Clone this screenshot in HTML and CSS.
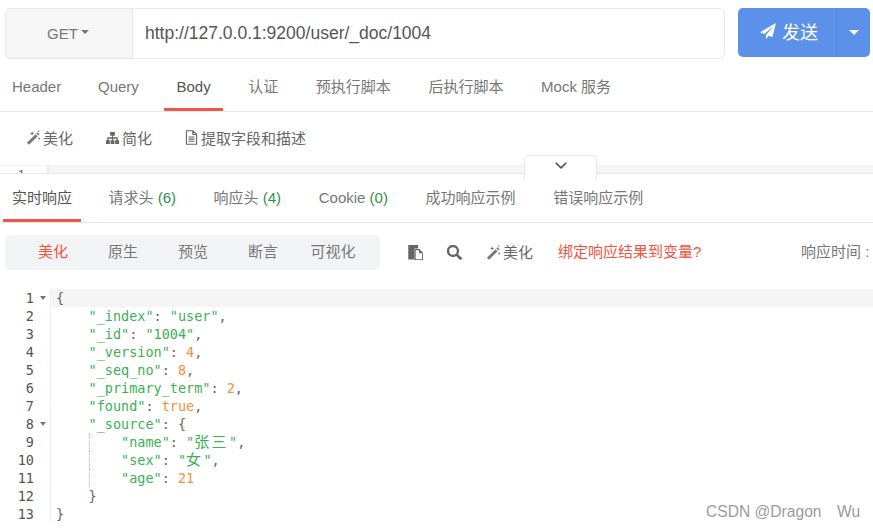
FILE: index.html
```html
<!DOCTYPE html>
<html lang="zh-CN">
<head>
<meta charset="utf-8">
<title>GET</title>
<link rel="stylesheet" href="styles.css">
</head>
<body>
<div class="page">
  <div class="url-row">
    <div class="url-box">
      <div class="method"><span>GET</span><i class="caret"></i></div>
      <div class="url">http://127.0.0.1:9200/user/_doc/1004</div>
    </div>
    <div class="send">
      <div class="send-main">
        <svg class="plane" viewBox="0 0 16 16"><path d="M16 0 0 9.200l4.400 1.800L13.600 3 6 12v4l2.700-3.300 3.600 1.500z"/></svg>
        <span>发送</span>
      </div>
      <div class="send-drop"><i class="caret caret-white"></i></div>
    </div>
  </div>

  <div class="tabs req-tabs">
    <div class="tab">Header</div>
    <div class="tab">Query</div>
    <div class="tab active">Body</div>
    <div class="tab">认证</div>
    <div class="tab">预执行脚本</div>
    <div class="tab">后执行脚本</div>
    <div class="tab">Mock 服务</div>
  </div>

  <div class="body-tools">
    <div class="tool">
      <svg class="ico wand" viewBox="0 0 16 16"><path d="M1 13.600 10.200 4.400l2.200 2.200-9.200 9.200z"/><path d="M11 3.600l1.300-1.300 2.200 2.200L13.200 5.800zM6.500 1.500l.7 1.500 1.500.7-1.500.7-.7 1.500-.7-1.500-1.500-.7 1.500-.7zM14 7.500l.5 1 1 .5-1 .5-.5 1-.5-1-1-.5 1-.5zM13.500 0l.4.8.8.4-.8.4-.4.8-.4-.8-.8-.4.8-.4z"/></svg>
      <span>美化</span>
    </div>
    <div class="tool">
      <svg class="ico" viewBox="0 0 16 16"><path d="M5.500 2h5v4.200H8.600v1.600h5V11H15v4h-4.200v-4h1.400V9.200H8.700V11H10v4H6v-4h1.300V9.200H3.800V11h1.400v4H1v-4h1.400V7.800h5.200V6.200H5.500z"/></svg>
      <span>简化</span>
    </div>
    <div class="tool">
      <svg class="ico" viewBox="0 0 16 16"><path fill="none" stroke="currentColor" stroke-width="1.200" d="M2.600.8h7l3.800 3.800v10.600H2.600zM9.400 1v3.800h3.800M4.800 7.400h6.400M4.800 9.700h6.400M4.800 12h6.400"/></svg>
      <span>提取字段和描述</span>
    </div>
  </div>

  <div class="req-editor">
    <div class="req-gutter">1</div>
    <div class="req-line"></div>
    <div class="req-code"></div>
    <div class="collapse">
      <svg class="chev" viewBox="0 0 12 7"><path fill="none" stroke="currentColor" stroke-width="1.600" d="M.8.800 6 5.800 11.200.800"/></svg>
    </div>
  </div>

  <div class="tabs res-tabs">
    <div class="tab active">实时响应</div>
    <div class="tab">请求头 <em>(6)</em></div>
    <div class="tab">响应头 <em>(4)</em></div>
    <div class="tab">Cookie <em>(0)</em></div>
    <div class="tab">成功响应示例</div>
    <div class="tab">错误响应示例</div>
  </div>

  <div class="res-tools">
    <div class="segments">
      <div class="seg seg-on">美化</div>
      <div class="seg">原生</div>
      <div class="seg">预览</div>
      <div class="seg">断言</div>
      <div class="seg">可视化</div>
    </div>
    <svg class="ico act-copy" viewBox="1 1 14 14.500"><path d="M1 1h9.500v3.500H7v10.500H1z"/><path fill="#fff" stroke="currentColor" stroke-width="1.100" d="M7.600 5.500h4l3.300 3.300v6.600H7.600z"/><path d="M11.400 5.500v3.500h3.500z"/></svg>
    <svg class="ico act-search" viewBox="1 1 14.500 14.500"><circle cx="6.800" cy="6.800" r="4.800" fill="none" stroke="currentColor" stroke-width="2.300"/><path fill="none" stroke="currentColor" stroke-width="2.600" d="M10.300 10.300 14.800 14.800"/></svg>
    <div class="tool act-beauty">
      <svg class="ico wand" viewBox="0 0 16 16"><path d="M1 13.600 10.200 4.400l2.200 2.200-9.200 9.200z"/><path d="M11 3.600l1.300-1.300 2.200 2.200L13.200 5.800zM6.500 1.500l.7 1.500 1.500.7-1.500.7-.7 1.500-.7-1.500-1.500-.7 1.500-.7zM14 7.500l.5 1 1 .5-1 .5-.5 1-.5-1-1-.5 1-.5zM13.500 0l.4.8.8.4-.8.4-.4.8-.4-.8-.8-.4.8-.4z"/></svg>
      <span>美化</span>
    </div>
    <div class="bind">绑定响应结果到变量?</div>
    <div class="time">响应时间 :</div>
  </div>

  <div class="code">
    <div class="ln cur"><b>1<i class="fold"></i></b><code><s class="p">{</s></code></div>
    <div class="ln"><b>2</b><code><u></u><s>"_index"</s><s class="p">: </s><s>"user"</s><s class="p">,</s></code></div>
    <div class="ln"><b>3</b><code><u></u><s>"_id"</s><s class="p">: </s><s>"1004"</s><s class="p">,</s></code></div>
    <div class="ln"><b>4</b><code><u></u><s>"_version"</s><s class="p">: </s><s class="n">4</s><s class="p">,</s></code></div>
    <div class="ln"><b>5</b><code><u></u><s>"_seq_no"</s><s class="p">: </s><s class="n">8</s><s class="p">,</s></code></div>
    <div class="ln"><b>6</b><code><u></u><s>"_primary_term"</s><s class="p">: </s><s class="n">2</s><s class="p">,</s></code></div>
    <div class="ln"><b>7</b><code><u></u><s>"found"</s><s class="p">: </s><s class="n">true</s><s class="p">,</s></code></div>
    <div class="ln"><b>8<i class="fold"></i></b><code><u></u><s>"_source"</s><s class="p">: {</s></code></div>
    <div class="ln"><b>9</b><code><u></u><u class="guide"></u><s>"name"</s><s class="p">: </s><s>"</s><s class="z">张三</s><s>"</s><s class="p">,</s></code></div>
    <div class="ln"><b>10</b><code><u></u><u class="guide"></u><s>"sex"</s><s class="p">: </s><s>"</s><s class="z">女</s><s>"</s><s class="p">,</s></code></div>
    <div class="ln"><b>11</b><code><u></u><u class="guide"></u><s>"age"</s><s class="p">: </s><s class="n">21</s></code></div>
    <div class="ln"><b>12</b><code><u></u><s class="p">}</s></code></div>
    <div class="ln"><b>13</b><code><s class="p">}</s></code></div>
  </div>

  <div class="mark">CSDN @Dragon　Wu</div>
</div>
</body>
</html>
```
FILE: styles.css
```css
* { box-sizing: border-box; }
html, body { margin: 0; padding: 0; background: #fff; }
.page {
  position: relative;
  width: 873px;
  height: 530px;
  overflow: hidden;
  font-family: "Liberation Sans", "Noto Sans CJK SC", sans-serif;
  font-size: 15px;
  color: #666;
}

.url-row { display: flex; height: 62px; padding: 8px 3px 0 5px; }
.url-box {
  display: flex;
  width: 720px;
  height: 51px;
  border: 1px solid #e8e8e8;
  border-radius: 5px;
  overflow: hidden;
}
.method {
  display: flex;
  align-items: center;
  justify-content: center;
  gap: 3px;
  width: 127px;
  background: #f6f6f6;
  border-right: 1px solid #e8e8e8;
  padding-right: 2px;
  color: #777;
}
.caret {
  display: block;
  width: 0;
  height: 0;
  border-style: solid;
  border-width: 4px 4px 0;
  border-color: #777 transparent transparent;
  margin-top: -3px;
}
.url { padding-left: 12px; line-height: 49px; font-size: 17.500px; color: #555; }
.send {
  display: flex;
  width: 132px;
  height: 49px;
  margin-left: 13px;
  background: #5b91e9;
  border-radius: 5px;
  color: #fff;
}
.send-main {
  display: flex;
  align-items: center;
  justify-content: center;
  gap: 6px;
  width: 99px;
  padding: 0 0 3px 4px;
  border-right: 1px solid #5488de;
  font-size: 18px;
}
.plane { width: 16px; height: 16px; fill: #fff; }
.send-drop { flex: 1; display: flex; align-items: center; justify-content: center; }
.caret-white { border-width: 5px 5px 0; border-top-color: #fff; margin: 0; }

.tabs { display: flex; gap: 13.600px; border-bottom: 1px solid #e8e8e8; }
.tab { height: 100%; padding: 0 12px; border-bottom: 3px solid transparent; margin-bottom: -1px; color: #777; white-space: nowrap; }
.tab em { font-style: normal; color: #2f8f4e; }
.tab.active { border-bottom-color: #ee5648; color: #555; }
.req-tabs { height: 50px; line-height: 50px; }
.req-tabs .tab:first-child { margin-right: -.8px; }
.res-tabs { height: 49px; line-height: 48px; }
.res-tabs .tab:first-child { margin: 0 1.900px -1px 3px; padding: 0 9px; }

.body-tools { display: flex; align-items: center; gap: 32px; height: 53px; padding: 0 0 2px 26px; }
.tool { display: flex; align-items: center; gap: 2px; color: #666; }
.ico { display: block; flex: none; width: 15px; height: 15px; fill: currentColor; color: #666; }
.wand { color: #777; }

.req-editor {
  position: relative;
  display: flex;
  height: 9px;
  border-bottom: 1px solid #e8e8e8;
  border-top: 1px solid #f3f3f3;
}
.req-gutter {
  width: 42px;
  padding-right: 17px;
  text-align: right;
  overflow: hidden;
  line-height: 18px;
  font-size: 13px;
}
.req-line { border-right: 2px solid #ececec; width: 7px; }
.req-code { flex: 1; background: #f5f5f5; }
.collapse {
  position: absolute;
  left: 524px;
  top: -11px;
  width: 73px;
  height: 25px;
  background: #fff;
  border: 1px solid #e8e8e8;
  border-bottom: 0;
  border-radius: 5px 5px 0 0;
  color: #555;
}
.chev { display: block; width: 12px; height: 7px; margin: 6px auto 0; }

.res-tools { display: flex; align-items: center; height: 66px; padding: 12px 0 19px 5px; line-height: 33px; white-space: nowrap; }
.segments {
  display: flex;
  flex: none;
  width: 375px;
  height: 35px;
  background: #f2f3f4;
  border-radius: 5px;
  padding-left: 13px;
  line-height: 33px;
  color: #777;
}
.seg { width: 70px; text-align: center; }
.seg-on { color: #f4523f; }
.act-copy { margin-left: 28px; }
.act-search { margin-left: 24px; }
.act-beauty { margin-left: 24px; }
.bind { margin-left: 25px; height: 35px; color: #f4523f; }
.time { margin-left: auto; width: 72px; height: 35px; color: #777; flex: none; }

.code {
  font-family: "DejaVu Sans Mono", "Noto Sans CJK SC", monospace;
  font-size: 13.500px;
}
.ln { display: flex; height: 18px; line-height: 18px; white-space: pre; }
.ln b {
  position: relative;
  flex: none;
  width: 51px;
  padding-right: 16px;
  text-align: right;
  font-weight: normal;
  color: #555;
  border-right: 1px solid #efefef;
}
.ln code { display: flex; flex: 1; padding-left: 5px; font: inherit; }
.ln.cur code { background: #f5f5f5; }
.ln s { text-decoration: none; color: #3bb054; }
.ln s.p { color: #666; }
.ln s.n { color: #f0913b; }
.ln s.z { font-size: 15px; letter-spacing: 2.400px; }
.ln u { display: block; flex: none; width: 32.500px; text-decoration: none; }
.ln u.guide { border-left: 1px dotted #bbb; }
.fold {
  position: absolute;
  right: 4px;
  top: 7px;
  width: 0;
  height: 0;
  border-style: solid;
  border-width: 4px 3px 0;
  border-color: #777 transparent transparent;
}

.mark {
  position: absolute;
  left: 706px;
  top: 502px;
  font-size: 15.600px;
  line-height: 20px;
  color: #9b9b9b;
  white-space: nowrap;
}
```
